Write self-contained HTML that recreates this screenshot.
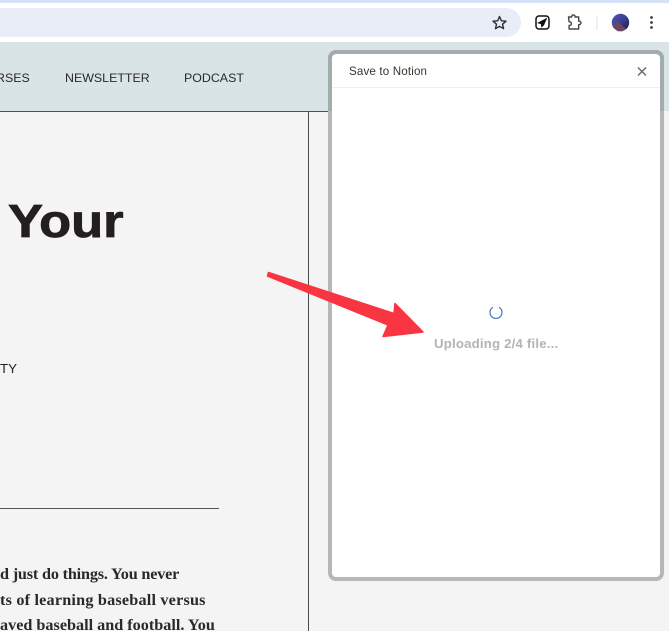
<!DOCTYPE html>
<html><head><meta charset="utf-8"><style>
html,body{margin:0;padding:0;width:669px;height:631px;overflow:hidden;background:#f4f4f4}
.a{position:absolute;white-space:nowrap}
body{font-family:"Liberation Sans",sans-serif;position:relative}
.s{font-family:"Liberation Serif",serif;font-weight:700;font-size:16.2px;color:#2b2828;line-height:20px}
.n{font-size:12.4px;color:#2a2a2a;top:70px;line-height:16px}
</style></head><body>
<div class="a" style="left:0;top:0;width:669px;height:3px;background:#d5e2f8"></div>
<div class="a" style="left:0;top:3px;width:669px;height:39px;background:#fff"></div>
<div class="a" style="left:0;top:8px;width:521px;height:29px;border-radius:0 15px 15px 0;background:#e9edf7"></div>
<svg class="a" style="left:0;top:0" width="669" height="45" viewBox="0 0 669 45">
<path d="M499.5 16.5l1.9 4.3 4.6.4-3.5 3 1.1 4.5-4.1-2.4-4 2.4 1-4.5-3.5-3 4.7-.4z" fill="none" stroke="#2e2f33" stroke-width="1.4" stroke-linejoin="round"/>
<rect x="536" y="16" width="13" height="13" rx="3" fill="#fff" stroke="#111" stroke-width="1.5"/>
<path d="M547 18l-9.5 5 3.6 1 .5 3.4 2.2-2.2z" fill="#111" stroke="#111" stroke-width=".4"/>
<path d="M568.5 17h3.2v-.4a1.7 1.7 0 0 1 3.4 0v.4h3.6v4.2h.6a1.7 1.7 0 0 1 0 3.4h-.6v4.4h-9.6v-3.6h.5a1.8 1.8 0 0 0 0-3.6h-.5z" fill="none" stroke="#44464a" stroke-width="1.4" stroke-linejoin="round"/>
<rect x="596.5" y="16" width="1" height="14" fill="#dbe3f1"/>
<defs><linearGradient id="g" x1="0" y1="0" x2="1" y2="1"><stop offset="0" stop-color="#5058b8"/><stop offset=".55" stop-color="#3a3a90"/><stop offset="1" stop-color="#1a1a30"/></linearGradient></defs>
<circle cx="620.5" cy="22.5" r="8.7" fill="url(#g)"/>
<path d="M612.5 26l4-5 3 2 3 3 4 3-4 2.2h-5z" fill="#6d4560"/>
<circle cx="651.5" cy="17.5" r="1.4" fill="#3c3d40"/><circle cx="651.5" cy="22.5" r="1.4" fill="#3c3d40"/><circle cx="651.5" cy="27.5" r="1.4" fill="#3c3d40"/>
</svg>
<div class="a" style="left:0;top:42px;width:669px;height:69px;background:#d9e4e6"></div>
<div class="a" style="left:0;top:111px;width:332px;height:1px;background:#4a4f50"></div>
<div class="a" style="left:308px;top:112px;width:1px;height:519px;background:#4a4a4a"></div>
<div class="a n" style="left:-4px">RSES</div>
<div class="a n" style="left:65px">NEWSLETTER</div>
<div class="a n" style="left:184px">PODCAST</div>
<div class="a" style="left:8px;top:194px;font-size:46px;line-height:54px;font-weight:700;color:#231f20;letter-spacing:0;-webkit-text-stroke:.8px #231f20;transform:scaleX(1.14);transform-origin:0 50%">Your</div>
<div class="a" style="left:0;top:361px;font-size:13.3px;line-height:16px;color:#222">TY</div>
<div class="a" style="left:0;top:508px;width:219px;height:1px;background:#555"></div>
<div class="a s" style="left:0;top:564px;letter-spacing:-.17px">d just do things. You never</div>
<div class="a s" style="left:0;top:590px;letter-spacing:.2px">ts of learning baseball versus</div>
<div class="a s" style="left:0;top:615px">aved baseball and football. You</div>
<div class="a" style="left:328px;top:50px;width:328px;height:523px;background:#fff;border:4px solid #b6b8b8;border-radius:8px"></div>
<div class="a" style="left:328px;top:50px;width:336px;height:61px;box-sizing:border-box;border:4px solid #a3acad;border-bottom:0;border-radius:8px 8px 0 0"></div>
<div class="a" style="left:332px;top:87px;width:328px;height:1px;background:#eeeeee"></div>
<div class="a" style="left:349px;top:64px;font-size:11.6px;line-height:15px;color:#37352f;letter-spacing:.15px">Save to Notion</div>
<svg class="a" style="left:630px;top:60px" width="22" height="22"><path d="M8 7.5l8 8M16 7.5l-8 8" stroke="#6a6e6f" stroke-width="1.5" fill="none"/></svg>
<svg class="a" style="left:484px;top:300px" width="24" height="24"><path d="M8.5 7.5a6 6 0 1 0 7 0" fill="none" stroke="#4f7fc4" stroke-width="1.3" stroke-linecap="round"/></svg>
<div class="a" style="left:434px;top:336px;font-size:13.2px;line-height:16px;font-weight:700;color:#b4b4b4;letter-spacing:.2px">Uploading 2/4 file...</div>
<svg class="a" style="left:0;top:0;pointer-events:none" width="669" height="631"><path d="M268.5 272.5L394 313.5L395 303.5L423 332L383 336.5L388 325L267.5 276Z" fill="#f93541" stroke="#f93541" stroke-width="1.5" stroke-linejoin="round"/></svg>
</body></html>
